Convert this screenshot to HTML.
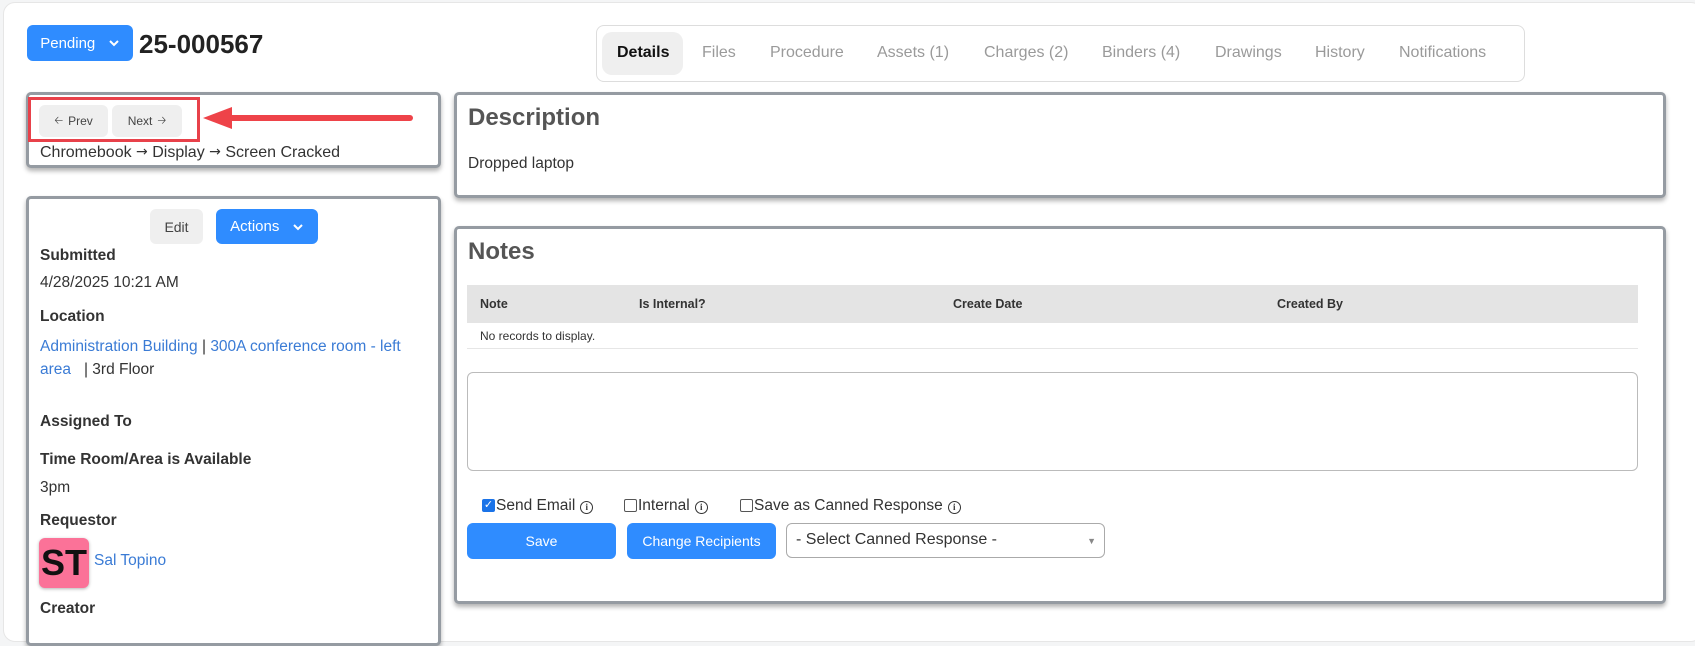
<!DOCTYPE html>
<html><head><meta charset="utf-8"><style>
*{box-sizing:border-box;margin:0;padding:0}
body{width:1695px;height:625px;overflow:hidden;background:#f4f5f6;font-family:"Liberation Sans",sans-serif;color:#333;position:relative}
.page{position:absolute;left:3px;top:2px;width:1700px;height:640px;background:#fff;border-radius:12px;border:1px solid #e6e6e6}
.a{position:absolute}
.panel{position:absolute;border:3px solid #959ba2;border-radius:5px;background:#fff;box-shadow:0 3px 5px rgba(0,0,0,.3)}
.btn{position:absolute;border-radius:6px;display:flex;align-items:center;justify-content:center;font-size:14px}
.blue{background:#2f8cff;color:#fff}
.grey{background:#efefef;color:#444}
.lbl{position:absolute;left:40px;font-weight:bold;font-size:15.5px;color:#333}
.val{position:absolute;left:40px;font-size:15.5px;color:#333}
.lnk{color:#3a7bd5}
.tab{position:absolute;top:44px;font-size:16px;color:#9a9a9a}
.th{position:absolute;top:297px;font-size:12.5px;font-weight:bold;color:#333}
.cb{position:absolute;top:499px;width:13px;height:13px;border:1px solid #555;border-radius:2px;background:#fff}
.info{display:inline-block;width:13px;height:13px;border:1px solid #333;border-radius:50%;font-size:9px;text-align:center;line-height:11px;font-weight:bold;vertical-align:0px;margin-left:5px;font-family:"Liberation Serif",serif}
.ck{position:absolute;top:497px;font-size:15.5px;color:#333}
.ar{display:inline-block;font-family:"DejaVu Sans",sans-serif;font-size:14px;vertical-align:1px}
</style></head><body>
<div class="page"></div>

<div class="btn blue" style="left:27px;top:25px;width:106px;height:36px;font-size:15px">Pending&nbsp;&nbsp;&nbsp;<svg width="12" height="8" viewBox="0 0 12 8"><path d="M2 2l4 4 4-4" stroke="#fff" stroke-width="2" fill="none"/></svg></div>
<div class="a" style="left:139px;top:29px;font-size:26px;font-weight:bold;color:#222">25-000567</div>

<div class="a" style="left:596px;top:25px;width:929px;height:57px;border:1px solid #ddd;border-radius:8px;background:#fff"></div>
<div class="a" style="left:602px;top:32px;width:81px;height:43px;background:#efefef;border-radius:10px"></div>
<div class="tab" style="left:617px;color:#111;font-weight:bold">Details</div>
<div class="tab" style="left:702px">Files</div>
<div class="tab" style="left:770px">Procedure</div>
<div class="tab" style="left:877px">Assets (1)</div>
<div class="tab" style="left:984px">Charges (2)</div>
<div class="tab" style="left:1102px">Binders (4)</div>
<div class="tab" style="left:1215px">Drawings</div>
<div class="tab" style="left:1315px">History</div>
<div class="tab" style="left:1399px">Notifications</div>

<div class="panel" style="left:26px;top:92px;width:415px;height:76px"></div>
<div class="btn grey" style="left:39px;top:105px;width:69px;height:32px;font-size:12px"><span class="ar" style="font-size:11px;margin-right:5px">&#129120;</span>Prev</div>
<div class="btn grey" style="left:112px;top:105px;width:70px;height:32px;font-size:12px">Next<span class="ar" style="font-size:11px;margin-left:5px">&#129122;</span></div>
<div class="a" style="left:28px;top:97px;width:172px;height:45px;border:3px solid #e8414a"></div>
<svg class="a" style="left:200px;top:104px" width="215" height="30" viewBox="0 0 215 30"><path d="M26 14H210" stroke="#ee4349" stroke-width="6" stroke-linecap="round"/><path d="M3 14L32 3V25Z" fill="#ee4349"/></svg>
<div class="a" style="left:40px;top:144px;font-size:16px;color:#333">Chromebook <span class="ar">→</span> Display <span class="ar">→</span> Screen Cracked</div>

<div class="panel" style="left:26px;top:196px;width:415px;height:450px"></div>
<div class="btn grey" style="left:150px;top:209px;width:53px;height:35px">Edit</div>
<div class="btn blue" style="left:216px;top:209px;width:102px;height:35px;font-size:15px">Actions&nbsp;&nbsp;&nbsp;<svg width="12" height="8" viewBox="0 0 12 8"><path d="M2 2l4 4 4-4" stroke="#fff" stroke-width="2" fill="none"/></svg></div>
<div class="lbl" style="top:247px">Submitted</div>
<div class="val" style="top:274px">4/28/2025 10:21 AM</div>
<div class="lbl" style="top:308px">Location</div>
<div class="val" style="top:335px;width:375px;line-height:23px"><span class="lnk">Administration Building</span> | <span class="lnk">300A conference room - left area</span> &nbsp;&nbsp;| 3rd Floor</div>
<div class="lbl" style="top:413px">Assigned To</div>
<div class="lbl" style="top:451px">Time Room/Area is Available</div>
<div class="val" style="top:479px">3pm</div>
<div class="lbl" style="top:512px">Requestor</div>
<div class="a" style="left:39px;top:538px;width:50px;height:50px;background:#fb7298;border-radius:6px;font-size:36px;font-weight:bold;color:#111;text-align:center;line-height:50px;box-shadow:0 1px 3px rgba(0,0,0,.3)">ST</div>
<div class="a lnk" style="left:94px;top:552px;font-size:15.5px">Sal Topino</div>
<div class="lbl" style="top:600px">Creator</div>

<div class="panel" style="left:454px;top:92px;width:1212px;height:106px"></div>
<div class="a" style="left:468px;top:104px;font-size:24px;font-weight:bold;color:#555">Description</div>
<div class="a" style="left:468px;top:155px;font-size:15.5px;color:#333">Dropped laptop</div>

<div class="panel" style="left:454px;top:226px;width:1212px;height:378px"></div>
<div class="a" style="left:468px;top:238px;font-size:24px;font-weight:bold;color:#555">Notes</div>
<div class="a" style="left:467px;top:285px;width:1171px;height:38px;background:#e4e4e4"></div>
<div class="th" style="left:480px">Note</div>
<div class="th" style="left:639px">Is Internal?</div>
<div class="th" style="left:953px">Create Date</div>
<div class="th" style="left:1277px">Created By</div>
<div class="a" style="left:480px;top:329px;font-size:12px;color:#333">No records to display.</div>
<div class="a" style="left:467px;top:348px;width:1171px;height:1px;background:#e6e6e6"></div>
<div class="a" style="left:467px;top:372px;width:1171px;height:99px;border:1px solid #bbb;border-radius:6px"></div>

<div class="cb" style="left:482px;background:#1a73e8;border-color:#1a73e8;color:#fff;font-size:11px;line-height:11px;text-align:center">✓</div>
<div class="ck" style="left:496px">Send Email<span class="info">i</span></div>
<div class="cb" style="left:624px"></div>
<div class="ck" style="left:638px">Internal<span class="info">i</span></div>
<div class="cb" style="left:740px"></div>
<div class="ck" style="left:754px">Save as Canned Response<span class="info">i</span></div>

<div class="btn blue" style="left:467px;top:523px;width:149px;height:36px">Save</div>
<div class="btn blue" style="left:627px;top:523px;width:149px;height:36px">Change Recipients</div>
<div class="a" style="left:786px;top:523px;width:319px;height:35px;border:1px solid #aaa;border-radius:6px;font-size:16px;color:#333;padding:7px 9px">- Select Canned Response -<span style="position:absolute;right:8px;top:12px;font-size:9px;color:#888">▼</span></div>
</body></html>
